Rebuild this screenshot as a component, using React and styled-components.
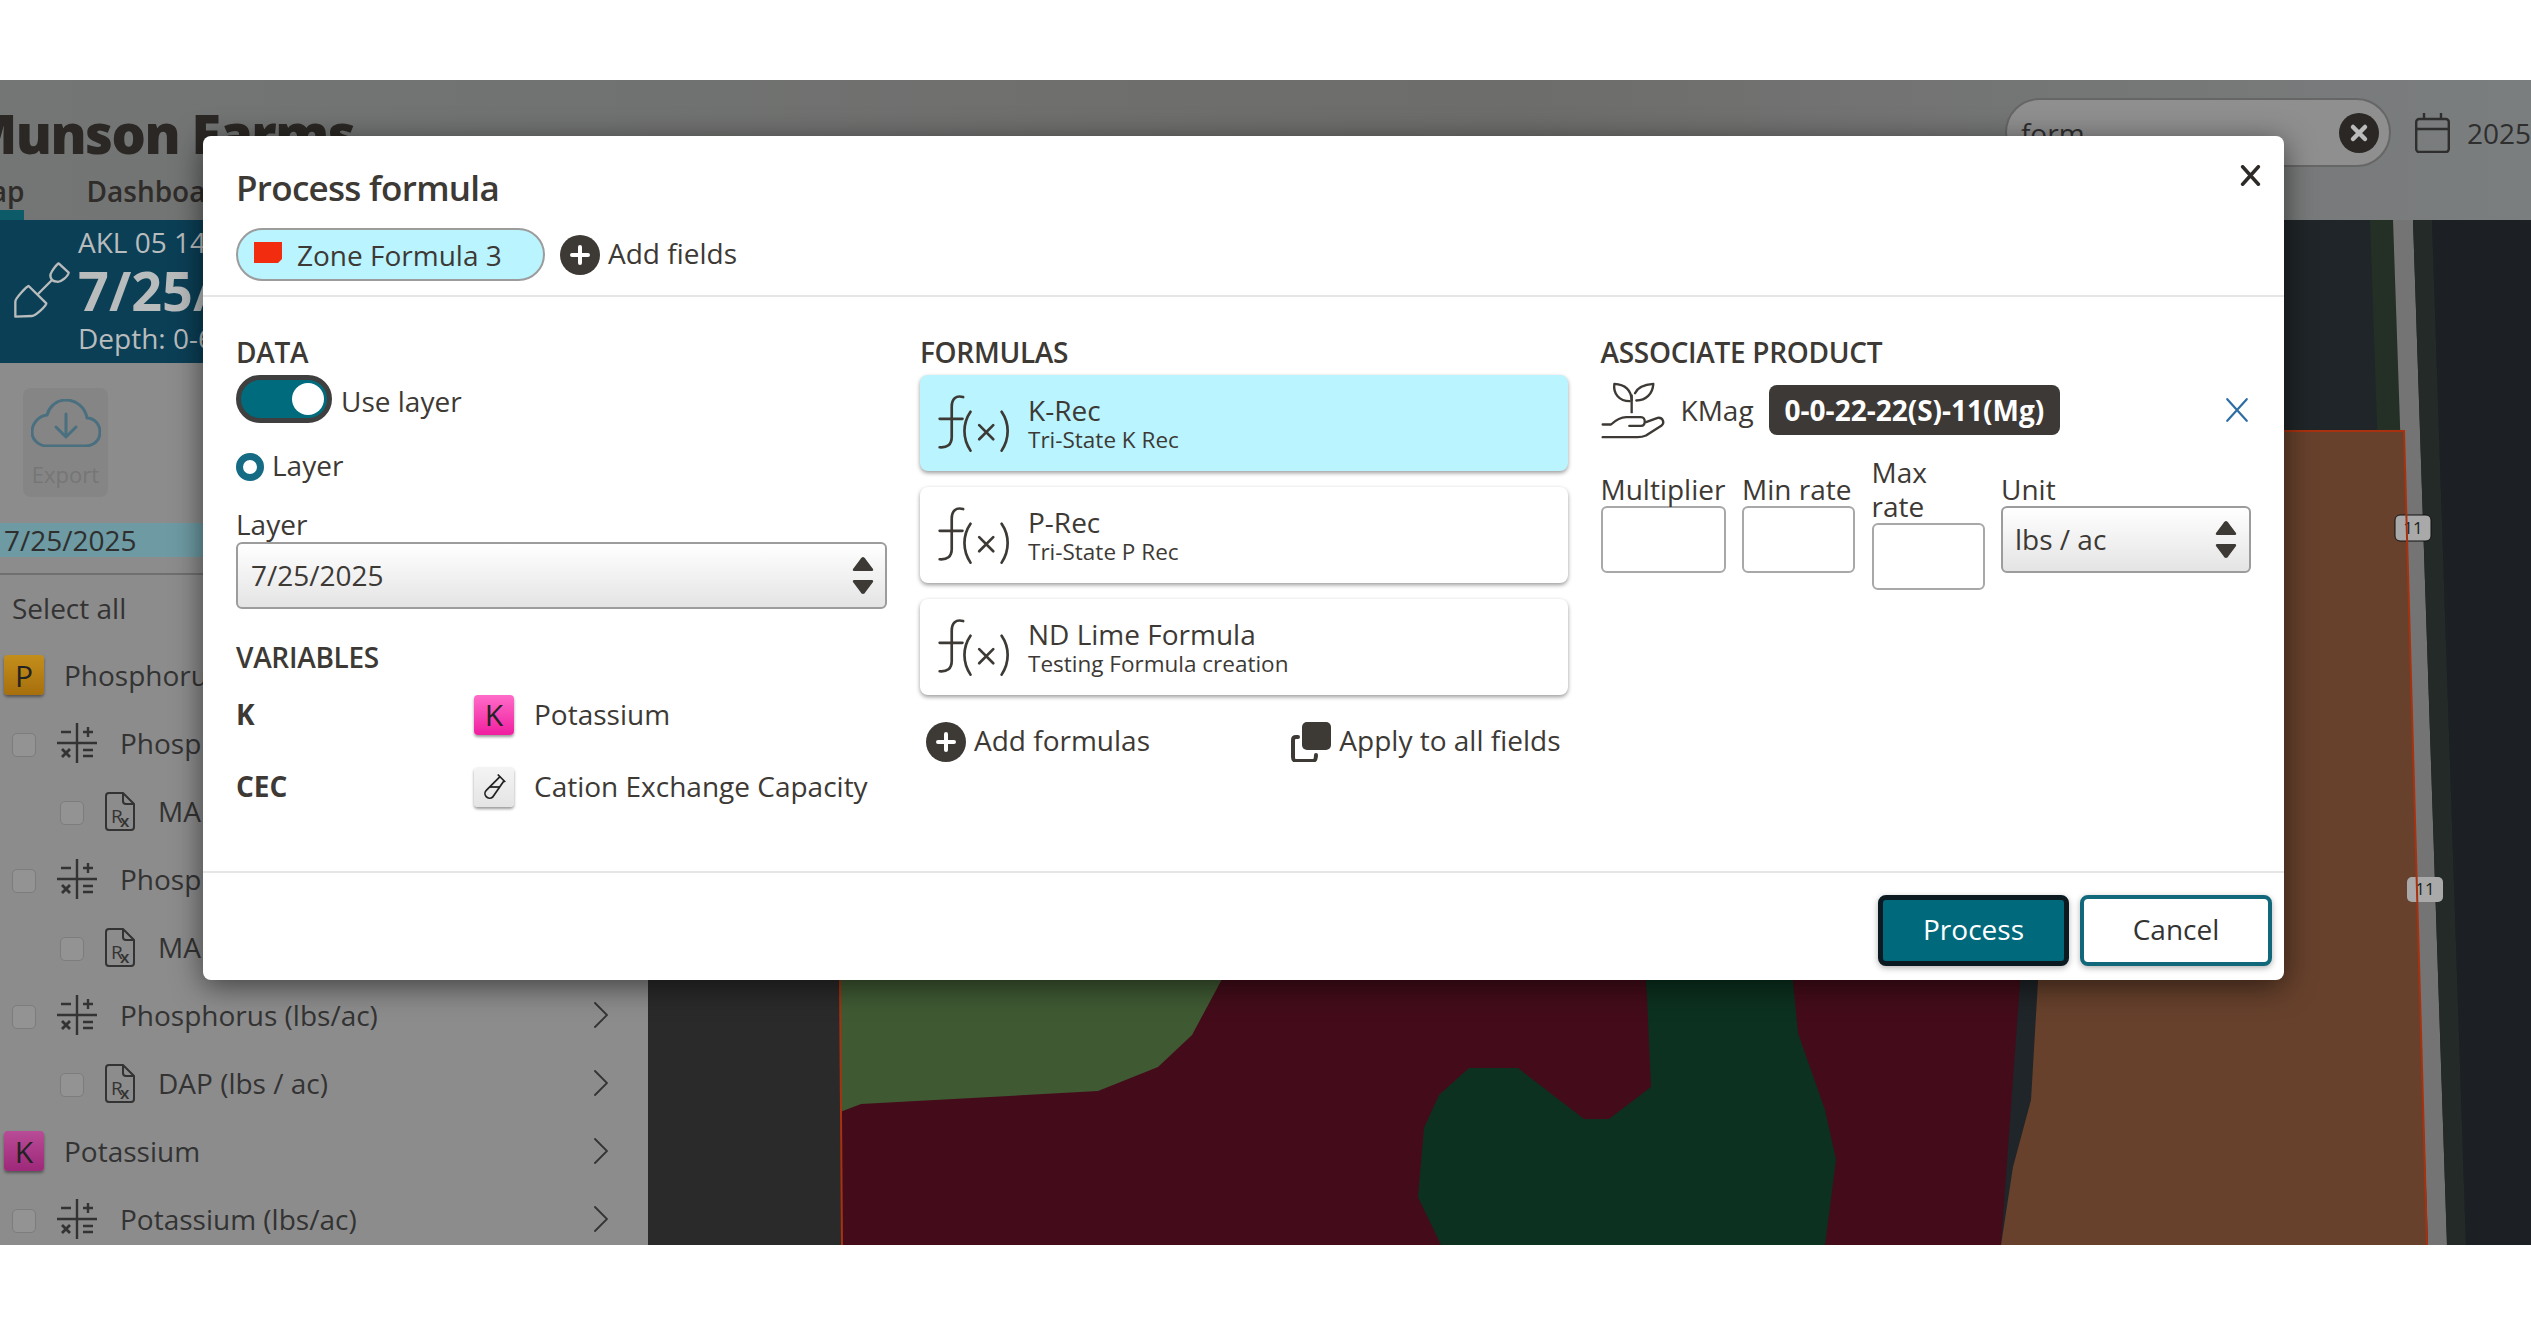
import React from "react";
import styled, { createGlobalStyle } from "styled-components";

const GlobalStyle = createGlobalStyle`
    * {
        box-sizing: border-box;
    }
    body {
        margin: 0;
        background: #fff;
        font-family: "Open Sans", sans-serif;
        color: #3d3935;
    }
`;

const PlusCircle = () => (
    <svg width="40" height="40" viewBox="0 0 40 40">
        <circle cx="20" cy="20" r="20" fill="#3d3935" />
        <path d="M20 12v16M12 20h16" stroke="#fff" strokeWidth="4" strokeLinecap="round" />
    </svg>
);

const CopyIcon = () => (
    <svg width="40" height="40" viewBox="0 0 40 40">
        <rect x="11" y="0" width="29" height="28" rx="5" fill="#3d3935" />
        <path d="M7 15H5C3 15 2 16 2 18V35C2 38 3 39 6 39H21C24 39 25 38 25 33" fill="none" stroke="#3d3935" strokeWidth="4" strokeLinecap="round" />
    </svg>
);

const FormulaIcon = () => (
    <svg width="72" height="57" viewBox="55 70 215 170" fill="none" stroke="#3d3935" strokeWidth="8" strokeLinecap="round">
        <path d="M130 76C108 70 96 82 96 105V195C96 218 82 228 60 226" />
        <path d="M60 141H128" />
        <path d="M152 120C128 155 128 200 152 236" />
        <path d="M178 160L220 202M220 160L178 202" />
        <path d="M245 120C269 155 269 200 245 236" />
    </svg>
);

const PlantIcon = () => (
    <svg width="65" height="57" viewBox="30 35 195 170" fill="none" stroke="#3d3935" strokeWidth="7" strokeLinecap="round" strokeLinejoin="round">
        <path d="M122 88C120 60 105 42 70 40C66 70 85 92 116 92" />
        <path d="M136 90C165 90 185 70 187 40C160 42 140 50 132 68" />
        <path d="M122 75V125" />
        <path d="M35 162H60C75 148 90 138 110 140H150C165 140 165 165 150 166H115" />
        <path d="M165 155L200 142C215 140 222 155 212 165L165 195C158 198 150 200 140 200H35" />
    </svg>
);

const TubeIcon = () => (
    <svg width="30" height="30" viewBox="0 0 24 24" fill="none" stroke="#222" strokeWidth="1.4" strokeLinejoin="round">
        <path d="M15 2L21 8" />
        <path d="M17 3.5L6 14.5A3.6 3.6 0 0 0 11 20L20 7" />
        <path d="M8.5 12H16.5" />
    </svg>
);

const XIcon = ({ size, color, weight }) => (
    <svg width={size} height={size} viewBox="0 0 24 24" fill="none" stroke={color} strokeWidth={weight} strokeLinecap="round">
        <path d="M3 2L21 22M21 2L3 22" />
    </svg>
);

const StepperArrows = () => (
    <svg width="22" height="37" viewBox="0 0 22 37" fill="#3d3935">
        <path d="M11 0C12 0 13 1 13.5 2L21 12C21.5 13 21 14 20 14H2C1 14 0.5 13 1 12L8.5 2C9 1 10 0 11 0Z" />
        <path d="M11 37C12 37 13 36 13.5 35L21 25C21.5 24 21 23 20 23H2C1 23 0.5 24 1 25L8.5 35C9 36 10 37 11 37Z" />
    </svg>
);

const ShovelIcon = () => (
    <svg width="60" height="60" viewBox="30 120 180 180" fill="none" stroke="#b9bcbd" strokeWidth="7" strokeLinejoin="round" strokeLinecap="round">
        <path d="M40 290V245C40 235 75 198 80 198L133 250C133 258 100 288 90 288Z" />
        <path d="M108 222L150 180" />
        <path d="M150 180C145 172 143 168 146 162C150 150 165 132 170 130L200 158C198 170 175 188 165 185C158 185 154 183 150 180Z" />
    </svg>
);

const CloudIcon = () => (
    <svg width="70" height="48" viewBox="0 0 70 48" fill="none" stroke="#4a7080" strokeWidth="3" strokeLinecap="round" strokeLinejoin="round">
        <path d="M16 47H54C64 47 69 40 69 33C69 25 63 19 56 19C54 8 45 1 35 1C24 1 18 9 16 16C7 17 1 25 1 33C1 41 8 47 16 47Z" />
        <path d="M35 15V37M25 28L35 38L45 28" />
    </svg>
);

const CalcIcon = () => (
    <svg width="40" height="40" viewBox="0 0 40 40" fill="none" stroke="#333" strokeWidth="2.4">
        <path d="M20 0V40M0 20H40" />
        <path d="M4 9H14M26 9H36M31 4V14" />
        <path d="M5 26L13 34M13 26L5 34" strokeWidth="2.8" />
        <path d="M26 27H36M26 33H36" />
    </svg>
);

const RxIcon = () => (
    <svg width="30" height="39" viewBox="0 0 30 39" fill="none" stroke="#333" strokeWidth="2">
        <path d="M4 1H18L29 12V35C29 37 28 38 26 38H4C2 38 1 37 1 35V4C1 2 2 1 4 1Z" />
        <path d="M18 1V9C18 11 19 12 21 12H29" />
        <text x="6" y="31" fontSize="19" fontFamily="Open Sans" fill="#333" stroke="none">R</text>
        <text x="15" y="35" fontSize="17" fontFamily="Open Sans" fontWeight="600" fill="#333" stroke="none">x</text>
    </svg>
);

const Chevron = () => (
    <svg width="14" height="26" viewBox="0 0 14 26" fill="none" stroke="#333" strokeWidth="1.8" strokeLinecap="round">
        <path d="M1 1L13 13L1 25" />
    </svg>
);

const CalendarIcon = () => (
    <svg width="35" height="40" viewBox="0 0 35 40" fill="none" stroke="#2e2e2e" strokeWidth="2.4">
        <rect x="1.2" y="6" width="32.6" height="33" rx="3" />
        <path d="M1 16H34M9 0V6M26 0V6" />
    </svg>
);

const RoundClear = () => (
    <svg width="40" height="40" viewBox="0 0 40 40">
        <circle cx="20" cy="20" r="20" fill="#2a2724" />
        <path d="M14 14L26 26M26 14L14 26" stroke="#bbb" strokeWidth="4.5" strokeLinecap="round" />
    </svg>
);

const MapDrawing = () => (
    <MapSvg viewBox="648 220 1883 1025" preserveAspectRatio="none">
        <rect x="648" y="220" width="1883" height="1025" fill="#1f2528" />
        <rect x="648" y="220" width="194" height="1025" fill="#2a2a2a" />
        <polygon points="2370,220 2393,220 2428,1245 2405,1245" fill="#243026" />
        <polygon points="2393,220 2413,220 2447,1245 2428,1245" fill="#747474" />
        <polygon points="2413,220 2432,220 2466,1245 2447,1245" fill="#232a27" />
        <polygon points="2432,220 2531,220 2531,1245 2466,1245" fill="#1c1f23" />
        <polygon points="840,431 2060,431 2001,1245 842,1245" fill="#440c1a" />
        <polygon points="840,900 1240,900 1221,981 1192,1035 1158,1067 1098,1091 861,1104 840,1112" fill="#3f5a33" />
        <polygon points="1640,900 1793,900 1793,981 1798,1033 1825,1110 1836,1160 1825,1245 1441,1245 1418,1197 1424,1128 1439,1095 1469,1068 1518,1068 1584,1119 1609,1119 1651,1087 1647,997" fill="#0c3120" />
        <polygon points="2038,431 2404,431 2427,1245 2001,1245 2013,1167 2031,1100 2038,981" fill="#67412c" />
        <rect x="2395" y="515" width="36" height="26" rx="5" fill="#a9a9a9" stroke="#111" strokeWidth="1" />
        <text x="2413" y="534" fontSize="17" textAnchor="middle" fontFamily="Open Sans" fill="#222">11</text>
        <rect x="2407" y="877" width="36" height="25" rx="5" fill="#a9a9a9" />
        <text x="2425" y="895" fontSize="17" textAnchor="middle" fontFamily="Open Sans" fill="#222">11</text>
        <path d="M2283 431H2404L2427 1245" fill="none" stroke="#a8310f" strokeWidth="2" />
        <path d="M840 980L842 1245" fill="none" stroke="#a8310f" strokeWidth="2" />
    </MapSvg>
);

const sideRows = [
    { level: 0, chip: "P", tone: "amber", label: "Phosphorus" },
    { level: 1, label: "Phosphorus (lbs/ac)" },
    { level: 2, label: "MAP (lbs / ac)" },
    { level: 1, label: "Phosphorus (lbs/ac)" },
    { level: 2, label: "MAP (lbs / ac)" },
    { level: 1, label: "Phosphorus (lbs/ac)" },
    { level: 2, label: "DAP (lbs / ac)" },
    { level: 0, chip: "K", tone: "pink", label: "Potassium" },
    { level: 1, label: "Potassium (lbs/ac)" },
];

const formulas = [
    { name: "K-Rec", note: "Tri-State K Rec", active: true },
    { name: "P-Rec", note: "Tri-State P Rec" },
    { name: "ND Lime Formula", note: "Testing Formula creation" },
];

const App = () => {
    return (
        <Page>
            <GlobalStyle />
            <Shell>
                <TopBar>
                    <Brand>
                        <FarmName>Munson Farms</FarmName>
                        <Nav>
                            <NavItem $active>Map</NavItem>
                            <NavItem>Dashboard</NavItem>
                        </Nav>
                    </Brand>
                    <TopTools>
                        <SearchPill>
                            <span>form</span>
                            <RoundClear />
                        </SearchPill>
                        <CalendarIcon />
                        <YearText>2025</YearText>
                    </TopTools>
                </TopBar>
                <Workspace>
                    <Sidebar>
                        <SampleBanner>
                            <ShovelIcon />
                            <SampleText>
                                <SampleSmall>AKL 05 14</SampleSmall>
                                <SampleDate>7/25/2025</SampleDate>
                                <SampleSmall>Depth: 0-6</SampleSmall>
                            </SampleText>
                        </SampleBanner>
                        <ExportBox>
                            <CloudIcon />
                            <ExportLabel>Export</ExportLabel>
                        </ExportBox>
                        <DateRow>7/25/2025</DateRow>
                        <SelectAll>Select all</SelectAll>
                        {sideRows.map((row, i) => (
                            <SideRow key={i} $level={row.level}>
                                {row.level === 0 ? (
                                    <LetterChip $tone={row.tone}>{row.chip}</LetterChip>
                                ) : (
                                    <SideCheck />
                                )}
                                {row.level === 1 && <CalcIcon />}
                                {row.level === 2 && <RxIcon />}
                                <SideLabel $level={row.level}>{row.label}</SideLabel>
                                <Chevron />
                            </SideRow>
                        ))}
                    </Sidebar>
                    <MapPanel>
                        <MapDrawing />
                    </MapPanel>
                </Workspace>

                <Modal>
                    <CloseButton>
                        <XIcon size={21} color="#2e2a27" weight={4} />
                    </CloseButton>
                    <ModalHeader>
                        <ModalTitle>Process formula</ModalTitle>
                        <FieldRow>
                            <FieldPill>
                                <PillSwatch width="29" height="22" viewBox="0 0 29 22">
                                    <path d="M1 0H29V17L25 21H1Z" fill="#f22c0e" />
                                </PillSwatch>
                                Zone Formula 3
                            </FieldPill>
                            <AddLink>
                                <PlusCircle />
                                Add fields
                            </AddLink>
                        </FieldRow>
                    </ModalHeader>
                    <ModalBody>
                        <Column>
                            <SectionLabel>DATA</SectionLabel>
                            <ToggleRow>
                                <Toggle>
                                    <Knob />
                                </Toggle>
                                <ToggleText>Use layer</ToggleText>
                            </ToggleRow>
                            <RadioRow>
                                <Radio />
                                <RadioText>Layer</RadioText>
                            </RadioRow>
                            <InputLabel>Layer</InputLabel>
                            <SelectBox>
                                <SelectText>7/25/2025</SelectText>
                                <StepperArrows />
                            </SelectBox>
                            <VariablesLabel>VARIABLES</VariablesLabel>
                            <VariableRow>
                                <VariableKey>K</VariableKey>
                                <LetterChip $tone="hot">K</LetterChip>
                                <VariableName>Potassium</VariableName>
                            </VariableRow>
                            <VariableRow>
                                <VariableKey>CEC</VariableKey>
                                <LetterChip $tone="plain">
                                    <TubeIcon />
                                </LetterChip>
                                <VariableName>Cation Exchange Capacity</VariableName>
                            </VariableRow>
                        </Column>

                        <Column>
                            <SectionLabel>FORMULAS</SectionLabel>
                            <FormulaList>
                                {formulas.map((f) => (
                                    <FormulaCard key={f.name} $active={f.active}>
                                        <FormulaIcon />
                                        <FormulaText>
                                            <FormulaName>{f.name}</FormulaName>
                                            <FormulaNote>{f.note}</FormulaNote>
                                        </FormulaText>
                                    </FormulaCard>
                                ))}
                            </FormulaList>
                            <FormulaActions>
                                <AddLink>
                                    <PlusCircle />
                                    Add formulas
                                </AddLink>
                                <AddLink>
                                    <CopyIcon />
                                    Apply to all fields
                                </AddLink>
                            </FormulaActions>
                        </Column>

                        <Column>
                            <SectionLabel>ASSOCIATE PRODUCT</SectionLabel>
                            <ProductRow>
                                <PlantIcon />
                                <ProductName>KMag</ProductName>
                                <ProductBadge>0-0-22-22(S)-11(Mg)</ProductBadge>
                                <ProductRemove>
                                    <XIcon size={26} color="#2d6da3" weight={2} />
                                </ProductRemove>
                            </ProductRow>
                            <RateRow>
                                <RateField $width="125px">
                                    <RateLabel>Multiplier</RateLabel>
                                    <RateInput />
                                </RateField>
                                <RateField $width="113px">
                                    <RateLabel>Min rate</RateLabel>
                                    <RateInput />
                                </RateField>
                                <RateField $width="113px">
                                    <RateLabel>Max rate</RateLabel>
                                    <RateInput />
                                </RateField>
                                <RateField $width="250px">
                                    <RateLabel>Unit</RateLabel>
                                    <UnitSelect>
                                        <SelectText>lbs / ac</SelectText>
                                        <StepperArrows />
                                    </UnitSelect>
                                </RateField>
                            </RateRow>
                        </Column>
                    </ModalBody>
                    <ModalFooter>
                        <ProcessButton>Process</ProcessButton>
                        <CancelButton>Cancel</CancelButton>
                    </ModalFooter>
                </Modal>
            </Shell>
        </Page>
    );
};

export default App;

const Page = styled.div`
    height: 1325px;
    padding: 80px 0;
    background: #fff;
`;

const Shell = styled.div`
    position: relative;
    height: 1165px;
    display: flex;
    flex-direction: column;
    overflow: hidden;
    background: #8c8c8c;
`;

const TopBar = styled.div`
    height: 140px;
    flex-shrink: 0;
    display: flex;
    justify-content: space-between;
    background: linear-gradient(90deg, #737675 0%, #6d6d6b 60%, #7b7e7f 100%);
`;

const Brand = styled.div`
    display: flex;
    flex-direction: column;
    margin-left: -35px;
`;

const FarmName = styled.div`
    font-size: 54px;
    font-weight: 800;
    line-height: 76px;
    margin-top: 15px;
    margin-bottom: 1px;
    letter-spacing: -1.5px;
    color: #2a2724;
    white-space: nowrap;
`;

const Nav = styled.div`
    display: flex;
    gap: 62px;
`;

const NavItem = styled.div`
    height: 48px;
    line-height: 38px;
    font-size: 28px;
    font-weight: 600;
    color: #2f2c2a;
    border-bottom: 10px solid ${({ $active }) => ($active ? "#0d5a68" : "transparent")};
`;

const TopTools = styled.div`
    display: flex;
    align-items: center;
    height: 105px;
    gap: 24px;
    font-size: 28px;
    color: #2e2e2e;
`;

const SearchPill = styled.div`
    width: 386px;
    height: 69px;
    padding: 0 10px 0 14px;
    display: flex;
    align-items: center;
    justify-content: space-between;
    border: 2px solid #666;
    border-radius: 35px;
    background: #8f8f8f;
`;

const YearText = styled.span`
    margin-left: -7px;
`;

const Workspace = styled.div`
    flex: 1;
    min-height: 0;
    display: flex;
`;

const Sidebar = styled.div`
    width: 648px;
    flex-shrink: 0;
    overflow: hidden;
    background: #8c8c8c;
    color: #333;
    font-size: 28px;
`;

const SampleBanner = styled.div`
    height: 143px;
    padding: 0 0 3px 12px;
    display: flex;
    align-items: center;
    gap: 6px;
    background: #0b3f56;
    color: #b9bcbd;
`;

const SampleText = styled.div`
    display: flex;
    flex-direction: column;
`;

const SampleSmall = styled.div`
    font-size: 28px;
    line-height: 34px;
    white-space: nowrap;
`;

const SampleDate = styled.div`
    font-size: 54px;
    font-weight: 700;
    line-height: 62px;
    white-space: nowrap;
`;

const ExportBox = styled.div`
    width: 85px;
    height: 109px;
    margin: 25px 0 0 23px;
    padding-top: 11px;
    display: flex;
    flex-direction: column;
    align-items: center;
    border-radius: 8px;
    background: #858585;
`;

const ExportLabel = styled.div`
    margin-top: 12px;
    font-size: 22px;
    line-height: 30px;
    color: #767676;
`;

const DateRow = styled.div`
    height: 34px;
    margin-top: 26px;
    padding-left: 4px;
    line-height: 34px;
    background: #6d9aa3;
    color: #2f2f2f;
`;

const SelectAll = styled.div`
    height: 68px;
    margin-top: 16px;
    padding-left: 12px;
    line-height: 66px;
    border-top: 2px solid #6f6f6f;
`;

const SideRow = styled.div`
    height: 68px;
    padding: 0 40px 0 ${({ $level }) => ["4px", "12px", "60px"][$level]};
    display: flex;
    align-items: center;
    gap: 21px;
    white-space: nowrap;
`;

const SideCheck = styled.div`
    width: 24px;
    height: 24px;
    flex-shrink: 0;
    margin-top: 4px;
    border: 1px solid #7c7c7c;
    border-radius: 5px;
    background: #939393;
`;

const SideLabel = styled.span`
    flex: 1;
    margin-left: ${({ $level }) => ($level === 0 ? "-1px" : "2px")};
    margin-bottom: 1px;
`;

const chipTones = {
    amber: "linear-gradient(#c48e1c, #a66f0c)",
    pink: "linear-gradient(#b84c96, #9e287a)",
    hot: "linear-gradient(#ff6cc8, #f01ea0)",
    plain: "linear-gradient(#f4f4f4, #e4e4e4)",
};

const LetterChip = styled.div`
    width: 40px;
    height: 40px;
    flex-shrink: 0;
    display: flex;
    align-items: center;
    justify-content: center;
    border-radius: 4px;
    font-size: 30px;
    color: #222;
    background: ${({ $tone }) => chipTones[$tone]};
    box-shadow: 0 2px 3px rgba(0, 0, 0, 0.4);
`;

const MapPanel = styled.div`
    flex: 1;
    min-width: 0;
`;

const MapSvg = styled.svg`
    display: block;
    width: 100%;
    height: 100%;
`;

const Modal = styled.div`
    position: absolute;
    left: 203px;
    top: 56px;
    width: 2081px;
    height: 844px;
    display: flex;
    flex-direction: column;
    border-radius: 8px;
    background: #fff;
    box-shadow: 0 6px 30px rgba(0, 0, 0, 0.55);
    font-size: 28px;
    line-height: 38px;
`;

const CloseButton = styled.div`
    position: absolute;
    top: 29px;
    right: 23px;
    display: flex;
`;

const ModalHeader = styled.div`
    height: 161px;
    flex-shrink: 0;
    padding: 33px 33px 0;
    border-bottom: 2px solid #e6e6e6;
`;

const ModalTitle = styled.div`
    font-size: 35px;
    font-weight: 600;
    line-height: 38px;
    letter-spacing: -0.7px;
`;

const FieldRow = styled.div`
    margin-top: 21px;
    display: flex;
    align-items: center;
    gap: 15px;
`;

const FieldPill = styled.div`
    width: 309px;
    height: 53px;
    padding-left: 15px;
    display: flex;
    align-items: center;
    gap: 15px;
    border: 2px solid #9c9c9c;
    border-radius: 27px;
    background: #b9f4ff;
`;

const PillSwatch = styled.svg`
    margin-bottom: 4px;
`;

const AddLink = styled.div`
    display: flex;
    align-items: flex-start;
    gap: 8px;
    line-height: 37px;
    white-space: nowrap;
`;

const ModalBody = styled.div`
    flex: 1;
    min-height: 0;
    padding: 37px 33px 0;
    display: grid;
    grid-template-columns: 651px 647.5px 649px;
    column-gap: 33px;
`;

const Column = styled.div`
    min-width: 0;
`;

const SectionLabel = styled.div`
    height: 38px;
    line-height: 36px;
    font-weight: 600;
    letter-spacing: -0.3px;
`;

const ToggleRow = styled.div`
    margin-top: 3px;
    display: flex;
    gap: 9px;
`;

const Toggle = styled.div`
    width: 96px;
    height: 48px;
    padding: 3px 3px 3px 51px;
    border: 5px solid #3f3f3f;
    border-radius: 24px;
    background: #006b7d;
`;

const Knob = styled.div`
    width: 32px;
    height: 32px;
    border-radius: 50%;
    background: #fff;
`;

const ToggleText = styled.span`
    padding-top: 7px;
`;

const RadioRow = styled.div`
    margin-top: 30px;
    height: 28px;
    display: flex;
    align-items: center;
    gap: 8px;
`;

const Radio = styled.div`
    width: 28px;
    height: 28px;
    border: 7px solid #156a84;
    border-radius: 50%;
    background: #fff;
`;

const RadioText = styled.span`
    padding-bottom: 4px;
`;

const InputLabel = styled.div`
    height: 34px;
    margin-top: 27px;
    line-height: 32px;
`;

const SelectBox = styled.div`
    height: 67px;
    padding: 0 11px 0 13px;
    display: flex;
    align-items: center;
    justify-content: space-between;
    border: 2px solid #9c9c9c;
    border-radius: 6px;
    background: linear-gradient(#fff, #e4e4e4);
`;

const SelectText = styled.span`
    padding-bottom: 2px;
`;

const VariablesLabel = styled(SectionLabel)`
    margin-top: 30px;
`;

const VariableRow = styled.div`
    height: 40px;
    margin-top: 18px;
    margin-bottom: 32px;
    display: grid;
    grid-template-columns: 218px 40px 1fr;
    column-gap: 20px;
    align-items: center;
    white-space: nowrap;

    & + & {
        margin-top: 0;
    }
`;

const VariableKey = styled.div`
    font-weight: 700;
    padding-bottom: 2px;
`;

const VariableName = styled.span`
    padding-bottom: 2px;
`;

const FormulaList = styled.div`
    margin-top: 3px;
    display: flex;
    flex-direction: column;
    gap: 16px;
`;

const FormulaCard = styled.div`
    height: 96px;
    padding-left: 18px;
    display: flex;
    align-items: center;
    gap: 18px;
    border-radius: 8px;
    background: ${({ $active }) => ($active ? "#b9f4ff" : "#fff")};
    box-shadow: 0 2px 4px rgba(0, 0, 0, 0.4);
`;

const FormulaText = styled.div`
    color: #3d3935;
`;

const FormulaName = styled.div`
    line-height: 34px;
`;

const FormulaNote = styled.div`
    font-size: 22.5px;
    line-height: 26px;
`;

const FormulaActions = styled.div`
    margin-top: 27px;
    padding: 0 7px 0 6px;
    display: flex;
    justify-content: space-between;
`;

const ProductRow = styled.div`
    margin-top: 10px;
    height: 56px;
    display: flex;
    align-items: center;
`;

const ProductName = styled.span`
    margin-left: 15px;
`;

const ProductBadge = styled.div`
    height: 50px;
    margin-left: 15px;
    padding: 0 16px;
    display: flex;
    align-items: center;
    border-radius: 8px;
    background: #3d3936;
    color: #fff;
    font-weight: 700;
    font-size: 28px;
    white-space: nowrap;
`;

const ProductRemove = styled.div`
    margin-left: auto;
    display: flex;
`;

const RateRow = styled.div`
    margin-top: 18px;
    display: flex;
    align-items: center;
    gap: 16.5px;
`;

const RateField = styled.div`
    width: ${({ $width }) => $width};
    flex-shrink: 0;
`;

const RateLabel = styled.div`
    line-height: 33.5px;
`;

const RateInput = styled.div`
    height: 67px;
    border: 2px solid #a8a8a8;
    border-radius: 6px;
    background: #fff;
`;

const UnitSelect = styled(SelectBox)`
    padding: 0 12px;
`;

const ModalFooter = styled.div`
    height: 109px;
    flex-shrink: 0;
    padding: 22px 12px 0 0;
    display: flex;
    justify-content: flex-end;
    gap: 11px;
    border-top: 2px solid #e6e6e6;
`;

const ProcessButton = styled.button`
    width: 191px;
    height: 71px;
    padding: 0 0 3px;
    border: 5px solid #0b1a20;
    border-radius: 8px;
    background: #006a7c;
    color: #fff;
    font: inherit;
    box-shadow: 0 2px 6px rgba(0, 0, 0, 0.3);
`;

const CancelButton = styled.button`
    width: 192px;
    height: 71px;
    padding: 0 0 3px;
    border: 4px solid #10687a;
    border-radius: 8px;
    background: #fff;
    color: #333;
    font: inherit;
    box-shadow: 0 2px 6px rgba(0, 0, 0, 0.3);
`;
